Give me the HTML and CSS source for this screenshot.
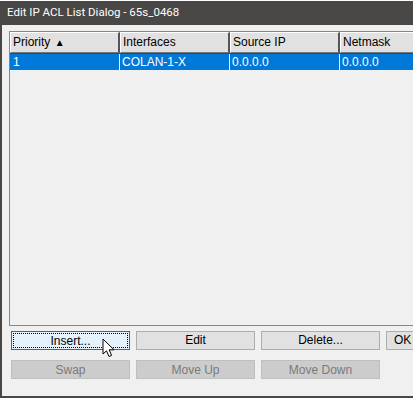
FILE: index.html
```html
<!DOCTYPE html>
<html lang="en">
<head>
<meta charset="utf-8">
<title>Edit IP ACL List Dialog</title>
<link rel="stylesheet" href="styles.css">
</head>
<body>
<div class="window">
  <div class="titlebar">Edit IP ACL List Dialog - 65s_0468</div>
  <div class="content">
    <div class="table">
      <div class="row head">
        <div class="cell">Priority <span class="sort">▲</span></div>
        <div class="cell">Interfaces</div>
        <div class="cell">Source IP</div>
        <div class="cell">Netmask</div>
      </div>
      <div class="row selected">
        <div class="cell">1</div>
        <div class="cell">COLAN-1-X</div>
        <div class="cell">0.0.0.0</div>
        <div class="cell">0.0.0.0</div>
      </div>
    </div>
    <div class="buttons">
      <div class="btn focused"><span class="focus-ring">Insert...</span>
        <svg class="cursor" width="14" height="21" viewBox="0 0 14 21"><path d="M1 1V16L4.5 12.8L7 18.5L9.6 17.4L7.2 11.8H12Z" fill="#fff" stroke="#000" stroke-width="1"/></svg>
      </div>
      <div class="btn">Edit</div>
      <div class="btn">Delete...</div>
      <div class="btn ok">OK</div>
    </div>
    <div class="buttons second">
      <div class="btn off">Swap</div>
      <div class="btn off">Move Up</div>
      <div class="btn off">Move Down</div>
    </div>
  </div>
</div>
</body>
</html>
```
FILE: styles.css
```css
html, body { margin: 0; padding: 0; background: #fff; }
body { width: 415px; height: 400px; overflow: hidden; font-family: "Liberation Sans", Arial, sans-serif; font-size: 12px; color: #000; }
.window { width: 413px; height: 397px; box-sizing: border-box; border-left: 2px solid #4a4846; border-bottom: 2px solid #4a4846; background: #f0f0f0; overflow: hidden; margin-top: 1px; }
.titlebar { height: 24px; margin-left: -2px; padding-left: 7px; background: #4a4846; color: #fff; line-height: 23px; font-family: Roboto, sans-serif; font-size: 11.5px; white-space: nowrap; }
.content { padding: 6px 0 0 7px; }
.table { width: 460px; height: 295px; box-sizing: border-box; border: 1px solid #828790; background: #f0f0f0; }
.row { display: flex; }
.head { height: 21px; border-bottom: 1px solid #444; }
.cell { flex: none; width: 110px; box-sizing: border-box; white-space: nowrap; }
.head .cell { padding-left: 2px; background: #e1e1e1; border: 1px solid #fff; border-right: 2px solid #555; border-bottom-color: #777; line-height: 18px; }
.sort { font-size: 10px; margin-left: 1px; }
.selected { height: 16px; background: #0078d7; color: #fff; line-height: 16px; }
.selected .cell { height: 16px; padding-left: 3px; border-right: 1px solid #fff; }
.selected .cell + .cell { padding-left: 2px; }
.buttons { display: flex; gap: 6px; margin: 5px 0 0 2px; width: 500px; }
.second { margin-top: 10px; }
.btn { position: relative; flex: none; width: 119px; height: 19px; box-sizing: border-box; border: 1px solid #adadad; background: #e1e1e1; text-align: center; line-height: 17px; }
.ok { text-align: left; padding-left: 7px; }
.off { background: #cccccc; border-color: #bfbfbf; color: #7a7a7a; line-height: 18px; }
.focused { border-color: #0078d7; background: #e5f1fb; padding: 1px; }
.focus-ring { display: block; height: 15px; line-height: 14px; box-sizing: border-box; border: 1px dotted #000; }
.cursor { position: absolute; left: 90px; top: 6px; }
```
